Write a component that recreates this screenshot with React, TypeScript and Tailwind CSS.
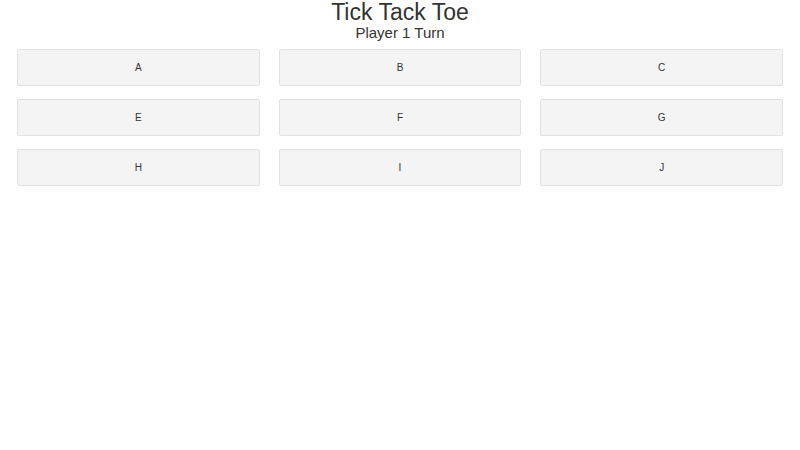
import React from 'react';

const cells = ['A', 'B', 'C', 'E', 'F', 'G', 'H', 'I', 'J'];

export default function App() {
  return (
    <div className="min-h-[450px] bg-white text-[#333] font-['Liberation_Sans',Arial,sans-serif]">
      {/* Header */}
      <div className="text-center">
        <h1 className="text-[23px] leading-[25px]">Tick Tack Toe</h1>
        <h2 className="text-[15px] leading-[16px]">Player 1 Turn</h2>
      </div>

      {/* Board */}
      <div className="grid grid-cols-3 gap-x-[19px] gap-y-[13px] px-[17px] mt-[8px]">
        {cells.map((c) => (
          <button
            key={c}
            className="h-[37px] bg-[#f4f4f4] border border-[#e2e2e2] rounded-[2px] text-[10px] text-[#333]"
          >
            {c}
          </button>
        ))}
      </div>
    </div>
  );
}
